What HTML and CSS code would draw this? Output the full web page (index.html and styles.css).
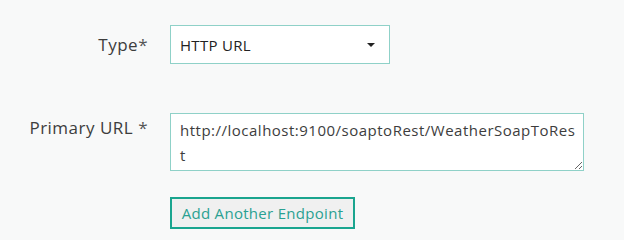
FILE: index.html
```html
<!DOCTYPE html>
<html lang="en">
<head>
    <meta charset="UTF-8">
    <meta name="viewport" content="width=device-width, initial-scale=1.0">
    <title>Endpoint</title>
    <link rel="stylesheet" href="styles.css">
</head>
<body>
    <form class="endpoint-form">
        <div class="form-row type-row">
            <label class="form-label" for="type">Type<span class="req">*</span></label>
            <div class="select-box" id="type">
                <span class="select-value">HTTP URL</span>
                <span class="caret"></span>
            </div>
        </div>

        <div class="form-row url-row">
            <label class="form-label" for="primaryUrl">Primary URL <span class="req">*</span></label>
            <div class="url-field">
                <textarea id="primaryUrl" class="url-input" spellcheck="false">http://localhost:9100/soaptoRest/WeatherSoapToRest</textarea>
                <button type="button" class="add-btn">Add Another Endpoint</button>
            </div>
        </div>
    </form>
</body>
</html>
```

FILE: styles.css
```css
* {
    margin: 0;
    padding: 0;
    box-sizing: border-box;
}

body {
    font-family: "Open Sans", Lato, sans-serif;
    background: #f8f9f9;
    color: #333;
    width: 624px;
    height: 240px;
    overflow: hidden;
}

.endpoint-form {
    padding-top: 25px;
}

.form-row {
    display: grid;
    grid-template-columns: 150px 1fr;
    column-gap: 20px;
}

.url-row {
    margin-top: 49px;
}

.form-label {
    text-align: right;
    font-size: 17px;
    letter-spacing: 0.5px;
    color: #3d3d3d;
    padding-right: 2px;
}

.type-row .form-label {
    align-self: center;
}

.url-row .form-label {
    padding-top: 3px;
}

.req {
    color: #555;
}

.select-box {
    width: 220px;
    height: 39px;
    background: #fff;
    border: 1px solid #8fd1c8;
    display: flex;
    align-items: center;
    justify-content: space-between;
    padding: 0 14px 0 9px;
    font-size: 15px;
    letter-spacing: 0.3px;
    color: #222;
}

.caret {
    width: 0;
    height: 0;
    border-left: 4px solid transparent;
    border-right: 4px solid transparent;
    border-top: 4px solid #222;
}

.url-field {
    display: flex;
    flex-direction: column;
    align-items: flex-start;
}

.url-input {
    width: 414px;
    height: 58px;
    background: #fff;
    border: 1px solid #8fd1c8;
    padding: 4px 4px 4px 9px;
    font-family: inherit;
    font-size: 15px;
    letter-spacing: 0.5px;
    line-height: 25px;
    color: #3d3d3d;
    resize: vertical;
    outline: none;
    overflow: hidden;
}

.add-btn {
    margin-top: 26px;
    width: 185px;
    height: 32px;
    background: #f0f0f0;
    border: 2px solid #1aa58f;
    color: #2aa192;
    font-family: inherit;
    font-size: 15px;
    letter-spacing: 0.3px;
    cursor: pointer;
}
```
